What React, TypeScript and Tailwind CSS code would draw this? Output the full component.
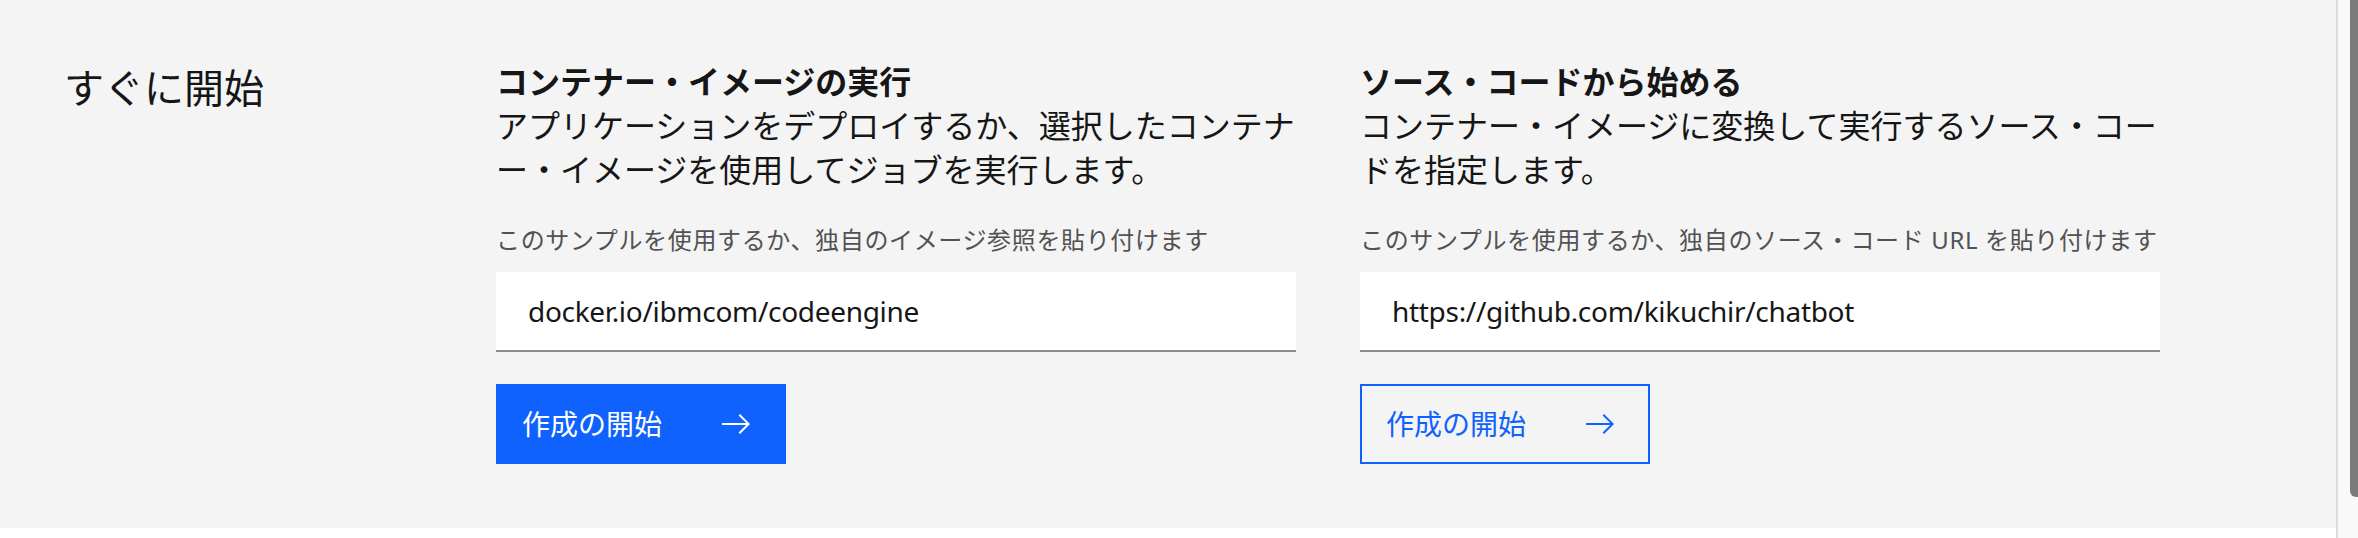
import React from 'react';

const jp = '[font-family:"Noto_Sans","Noto_Sans_CJK_JP",sans-serif]';

interface StartCardProps {
  title: string;
  lines: string[];
  helper: string;
  value: string;
  primary?: boolean;
}

// Carbon arrow--right (16)
const ArrowRight = ({ className }: { className?: string }) => (
  <svg viewBox="0 0 16 16" className={className} fill="currentColor" aria-hidden="true">
    <path d="M9.3 3.7 13.1 7.5H1v1h12.1l-3.8 3.8.7.7 5-5-5-5z" />
  </svg>
);

const StartCard: React.FC<StartCardProps> = ({ title, lines, helper, value, primary }) => (
  <div className="w-[800px] flex flex-col">
    <h3 className="text-[32px] leading-[44px] font-semibold text-[#161616]">{title}</h3>
    <p className="text-[32px] leading-[44px] text-[#161616] [line-break:loose]">
      {lines[0]}
      <br />
      {lines[1]}
    </p>
    <label className="mt-[32px] mb-[16px] text-[24px] leading-[32px] tracking-[0.64px] text-[#525252]">
      {helper}
    </label>
    <input
      readOnly
      defaultValue={value}
      className="h-[80px] w-full bg-white border-b-2 border-[#8d8d8d] px-[32px] text-[28px] tracking-[-0.3px] text-[#161616] outline-none"
    />
    <button
      className={`mt-[32px] h-[80px] w-[290px] flex items-center justify-between text-[28px] ${
        primary ? 'bg-[#0f62fe] text-white pl-[26px] pr-[34px]' : 'border-2 border-[#0f62fe] text-[#0f62fe] pl-[24px] pr-[32px]'
      }`}
    >
      <span>作成の開始</span>
      <ArrowRight className="w-[32px] h-[32px]" />
    </button>
  </div>
);

export default function App() {
  return (
    <div lang="ja" className={`flex h-[538px] w-full bg-white ${jp}`}>
      <div className="flex-1 flex flex-col">
        <section className="h-[528px] bg-[#f4f4f4] flex pt-[60px] pl-[64px]">
          <h2 className="w-[432px] text-[40px] leading-[56px] text-[#161616]">すぐに開始</h2>
          <div className="flex gap-[64px]">
            <StartCard
              primary
              title="コンテナー・イメージの実行"
              lines={[
                'アプリケーションをデプロイするか、選択したコンテナ',
                'ー・イメージを使用してジョブを実行します。',
              ]}
              helper="このサンプルを使用するか、独自のイメージ参照を貼り付けます"
              value="docker.io/ibmcom/codeengine"
            />
            <StartCard
              title="ソース・コードから始める"
              lines={[
                'コンテナー・イメージに変換して実行するソース・コー',
                'ドを指定します。',
              ]}
              helper="このサンプルを使用するか、独自のソース・コード URL を貼り付けます"
              value="https://github.com/kikuchir/chatbot"
            />
          </div>
        </section>
      </div>
      {/* scrollbar strip */}
      <div className="w-[22px] border-l-2 border-[#dedede] bg-[#f9f9f9] flex justify-end">
        <div className="w-[8px] h-[497px] bg-[#7b7b7b] rounded-bl-[6px]" />
      </div>
    </div>
  );
}
